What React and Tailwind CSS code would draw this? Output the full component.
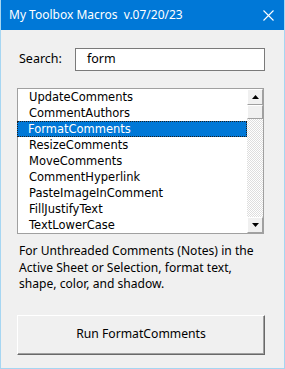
import React, { useState } from 'react';

const items = [
    'UpdateComments',
    'CommentAuthors',
    'FormatComments',
    'ResizeComments',
    'MoveComments',
    'CommentHyperlink',
    'PasteImageInComment',
    'FillJustifyText',
    'TextLowerCase',
];

const ui = { fontFamily: '"Noto Sans", "Open Sans", sans-serif' };
const listFont = { fontFamily: '"DejaVu Sans", Tahoma, sans-serif' };

const ScrollButton = ({ up }) => (
    <div className="w-[16px] h-[16px] bg-[#f0f0f0] border border-t-white border-l-white border-r-[#a0a0a0] border-b-[#a0a0a0] flex items-center justify-center">
        <svg width="7" height="4" viewBox="0 0 7 4">
            {up ? <path d="M3.5 0L7 4H0z" fill="#000" /> : <path d="M0 0h7L3.5 4z" fill="#000" />}
        </svg>
    </div>
);

const App = () => {
    const [selected, setSelected] = useState('FormatComments');

    return (
        <div className="w-[285px] h-[369px] bg-[#f0f0f0] border border-t-0 border-[#a6d6f2] flex flex-col overflow-hidden" style={ui}>
            {/* Title bar */}
            <div className="h-[30px] bg-[#0078d7] flex items-center justify-between pl-[8px] pr-[10px] text-white shrink-0">
                <span className="text-[12px] whitespace-pre">My Toolbox Macros  v.07/20/23</span>
                <svg width="11" height="11" viewBox="0 0 11 11" stroke="#fff" strokeWidth="1.1">
                    <path d="M0.5 0.5l10 10M10.5 0.5l-10 10" />
                </svg>
            </div>

            <div className="flex flex-col px-[16px]">
                {/* Search */}
                <div className="flex items-center mt-[18px] h-[23px]">
                    <span className="text-[12.5px] text-black ml-[2px] w-[56px]">Search:</span>
                    <div className="w-[190px] h-[23px] bg-white border border-[#7a7a7a] flex items-center px-[11px] text-[12.5px] text-black">
                        form
                    </div>
                </div>

                {/* List box */}
                <div className="mt-[17px] w-[247px] h-[146px] border border-[#a0a0a0] bg-white flex" style={listFont}>
                    <div className="flex-1 flex flex-col">
                        {items.map((item) => (
                            <div
                                key={item}
                                onClick={() => setSelected(item)}
                                className={
                                    item === selected
                                        ? 'h-[16px] leading-[14px] pl-[10px] text-[11.5px] bg-[#0078d7] text-white border border-dotted border-[#1e1e1e] -ml-px'
                                        : 'h-[16px] leading-[16px] pl-[11px] text-[11.5px] text-black'
                                }
                            >
                                {item}
                            </div>
                        ))}
                    </div>
                    <div className="w-[16px] flex flex-col bg-[repeating-conic-gradient(#ffffff_0_25%,#dedede_0_50%)] bg-[length:2px_2px]">
                        <ScrollButton up />
                        <div className="w-[16px] h-[14px] bg-[#f0f0f0] border border-t-white border-l-white border-r-[#a0a0a0] border-b-[#a0a0a0]"></div>
                        <div className="flex-1"></div>
                        <ScrollButton />
                    </div>
                </div>

                {/* Description */}
                <p className="mt-[9px] ml-[2px] text-[12.1px] leading-[16.5px] text-black">
                    For Unthreaded Comments (Notes) in the Active Sheet or Selection, format text, shape, color, and shadow.
                </p>

                {/* Run button */}
                <button className="mt-[22px] w-[248px] h-[40px] bg-[#f0f0f0] border border-t-white border-l-white border-r-[#696969] border-b-[#696969] shadow-[inset_-1px_-1px_0_#a0a0a0] text-[12.2px] text-black">
                    Run {selected}
                </button>
            </div>
        </div>
    );
};

export default App;
